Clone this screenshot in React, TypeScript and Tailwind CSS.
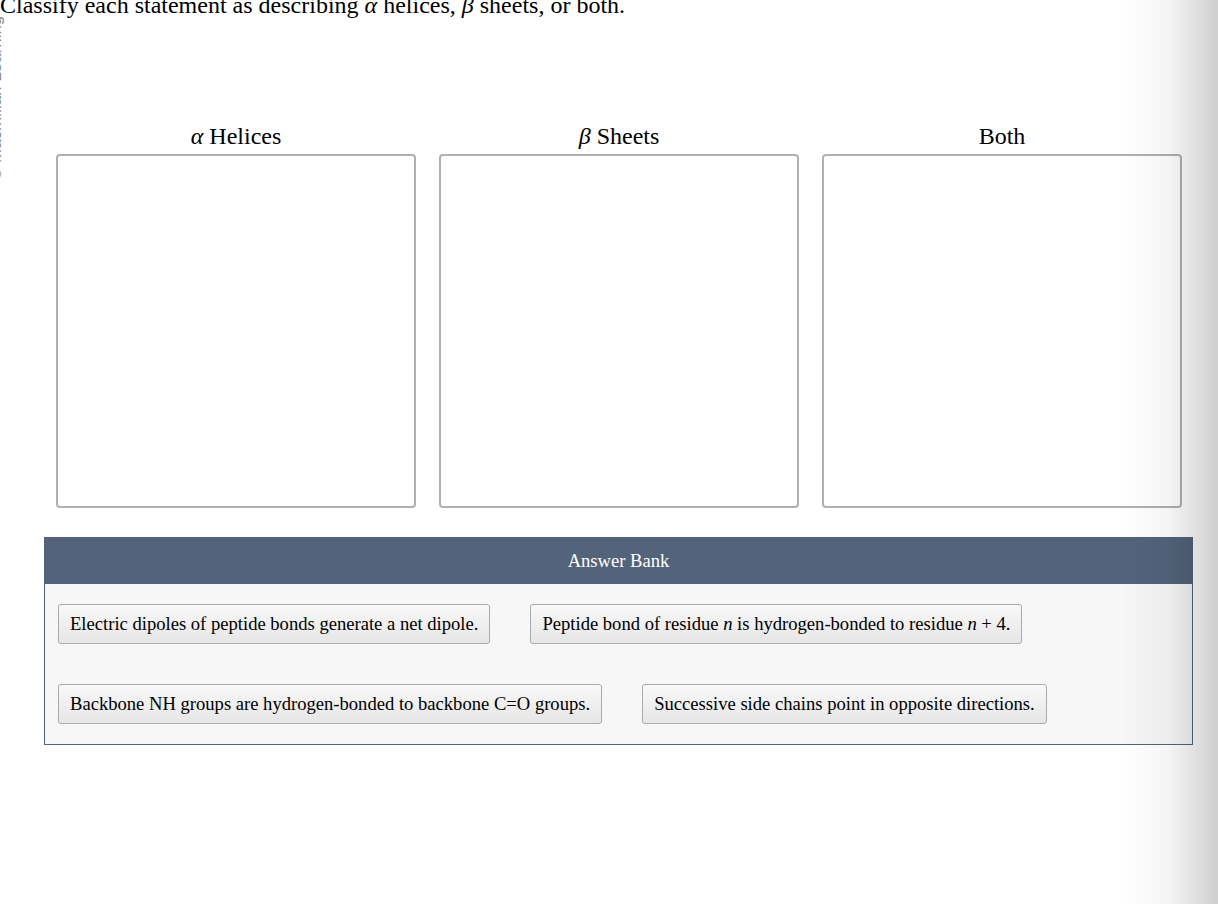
export default function App() {
  const serif = { fontFamily: '"Liberation Serif", "Times New Roman", serif' };
  const chip =
    "h-10 px-[11px] flex items-center rounded-[3px] border border-[#aaaaaa] bg-gradient-to-b from-[#f9f9f9] to-[#e6e6e6] text-[18.6px] text-black whitespace-nowrap";

  return (
    <div className="relative w-[1218px] h-[904px] overflow-hidden bg-white" style={serif}>
      {/* copyright strip on the left */}
      <div className="absolute left-[-11px] top-[14px] h-[168px] w-[14px] flex items-center justify-center">
        <span
          className="-rotate-90 whitespace-nowrap text-[17px] leading-[14px] text-[#8a8a8a]"
          style={{ fontFamily: '"Liberation Sans", Arial, sans-serif' }}
        >
          © Macmillan Learning
        </span>
      </div>

      <h1 className="mt-[-9px] text-[24px] leading-[28px] text-black">
        Classify each statement as describing <i>α</i> helices, <i>β</i> sheets, or both.
      </h1>

      {/* drop columns */}
      <div className="mt-[103px] ml-[56px] w-[1126px] grid grid-cols-3 gap-x-[23px]">
        {[
          { label: "Helices", greek: "α" },
          { label: "Sheets", greek: "β" },
          { label: "Both", greek: "" },
        ].map((c) => (
          <div key={c.label} className="flex flex-col">
            <div className="h-[32px] text-center text-[24px] leading-[29px] text-black">
              {c.greek && <i>{c.greek} </i>}
              {c.label}
            </div>
            <div className="h-[354px] rounded-[4px] border-2 border-[#b0b0b0] bg-white" />
          </div>
        ))}
      </div>

      {/* answer bank */}
      <div className="mt-[29px] ml-[44px] w-[1149px] border border-[#53637a]">
        <div className="h-[46px] flex items-center justify-center bg-[#53637a] text-[18.6px] text-white">
          Answer Bank
        </div>
        <div className="bg-[#f7f7f7] px-[13px] py-5 flex flex-wrap gap-x-10 gap-y-10">
          <div className={chip}>Electric dipoles of peptide bonds generate a net dipole.</div>
          <div className={chip}>
            Peptide bond of residue&nbsp;<i>n</i>&nbsp;is hydrogen-bonded to residue&nbsp;<i>n</i>&nbsp;+&nbsp;4.
          </div>
          <div className={chip}>Backbone NH groups are hydrogen-bonded to backbone C=O groups.</div>
          <div className={chip}>Successive side chains point in opposite directions.</div>
        </div>
      </div>

      {/* right edge shade */}
      <div className="pointer-events-none absolute right-0 top-0 h-full w-[100px] bg-gradient-to-r from-black/0 via-black/[0.04] to-black/[0.19]" />
    </div>
  );
}
